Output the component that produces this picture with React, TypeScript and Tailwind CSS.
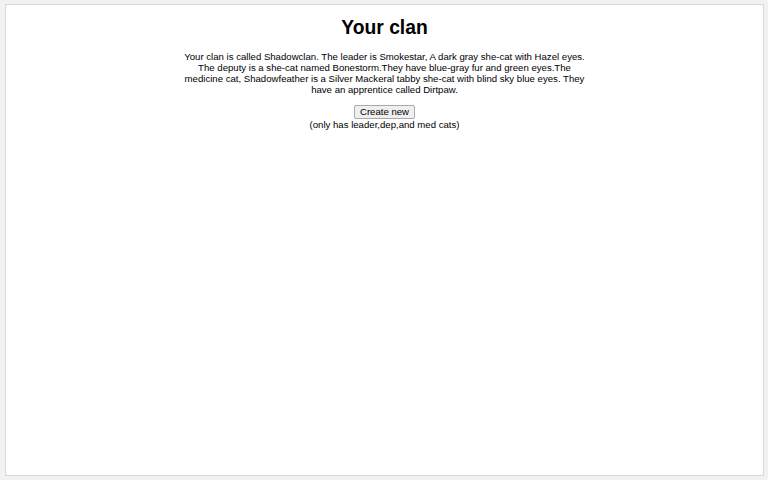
export default function App() {
  return (
    <div className="h-[480px] w-[768px] bg-[#f2f2f2] pt-[4px] pl-[5px] pr-[4px] pb-[4px] font-['Liberation_Sans',Arial,sans-serif] text-black">
      <div className="h-[472px] w-[759px] border border-[#d9d9d9] bg-white">
        <div className="flex flex-col items-center">
          <h1 className="mt-[12px] text-[19.3px] font-bold leading-[22px]">Your clan</h1>
          <p className="mt-[12px] w-[404px] text-center text-[9.6px] leading-[11px]">
            Your clan is called Shadowclan. The leader is Smokestar, A dark gray she-cat with Hazel eyes. The deputy is a she-cat named Bonestorm.They have blue-gray fur and green eyes.The medicine cat, Shadowfeather is a Silver Mackeral tabby she-cat with blind sky blue eyes. They have an apprentice called Dirtpaw.
          </p>
          <button className="mt-[10px] h-[14px] rounded-[2px] border border-[#a9a9a9] bg-[#efefef] px-[5px] text-[9.6px] leading-[12px]">
            Create new
          </button>
          <div className="text-[9.6px] leading-[11px]">(only has leader,dep,and med cats)</div>
        </div>
      </div>
    </div>
  );
}
